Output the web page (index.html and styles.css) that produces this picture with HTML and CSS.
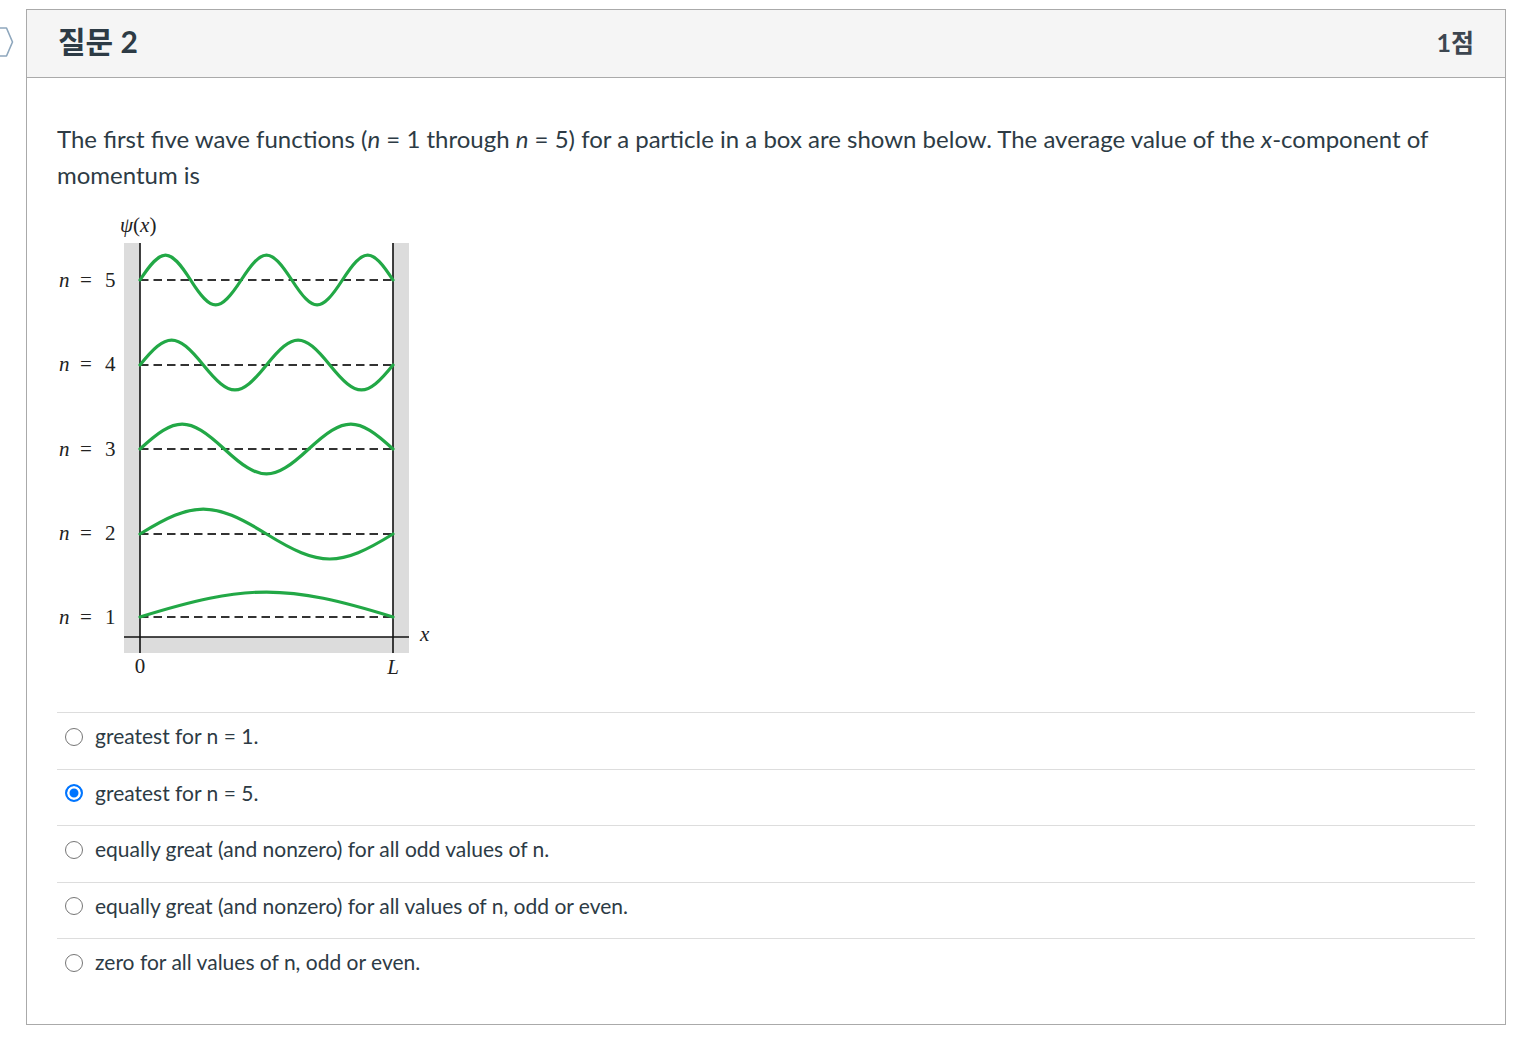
FILE: index.html
```html
<!DOCTYPE html>
<html lang="ko">
<head>
<meta charset="utf-8">
<title>질문 2</title>
<link rel="stylesheet" href="styles.css">
</head>
<body>
<svg class="flag" width="16" height="36" viewBox="0 0 16 36" aria-hidden="true">
  <path d="M-2 4 H6.5 L12.5 18 L6.5 32 H-2" fill="none" stroke="#8ea7bd" stroke-width="1.6" stroke-linejoin="round"/>
</svg>
<div class="question">
  <div class="header">
    <h2 class="title">질문 2</h2>
    <div class="points">1점</div>
  </div>
  <div class="body">
    <p class="text">The first five wave functions (<i>n</i> = 1 through <i>n</i> = 5) for a particle in a box are shown below. The average value of the <i>x</i>-component of momentum is</p>
    <svg class="figure" width="380" height="497" viewBox="56 193 380 497">
      <g fill="#dcdcdc">
        <rect x="123" y="243" width="16" height="410"/>
        <rect x="392" y="243" width="16" height="410"/>
        <rect x="123" y="637" width="285" height="16"/>
      </g>
      <g stroke="#111" stroke-width="1.6">
        <line x1="139" y1="243" x2="139" y2="653"/>
        <line x1="392" y1="243" x2="392" y2="653"/>
        <line x1="123" y1="637" x2="408" y2="637"/>
      </g>
      <g stroke="#333" stroke-width="1.8" stroke-dasharray="8.5 5">
        <line x1="139" y1="280" x2="392" y2="280"/>
        <line x1="139" y1="365" x2="392" y2="365"/>
        <line x1="139" y1="449" x2="392" y2="449"/>
        <line x1="139" y1="534" x2="392" y2="534"/>
        <line x1="139" y1="617" x2="392" y2="617"/>
      </g>
      <g fill="none" stroke="#22a846" stroke-width="3.2" stroke-linecap="round">
        <path d="M139 617 C246.4 583.7 284.6 583.7 392 617"/>
        <path d="M139 534 C192.7 500.7 211.8 500.7 265.5 534 S338.3 567.3 392 534"/>
        <path d="M139 449 C174.8 415.7 187.5 415.7 223.3 449 S271.9 482.3 307.7 449 S356.2 415.7 392 449"/>
        <path d="M139 365 C165.8 331.7 175.4 331.7 202.3 365 S238.7 398.3 265.5 365 S301.9 331.7 328.8 365 S365.2 398.3 392 365"/>
        <path d="M139 280 C160.5 246.7 168.7 246.7 189.6 280 S218.7 313.3 240.2 280 S269.3 246.7 290.8 280 S319.9 313.3 341.4 280 S370.5 246.7 392 280"/>
      </g>
      <g class="lbl">
        <text y="287"><tspan x="58" font-style="italic">n</tspan><tspan x="79">=</tspan><tspan x="104">5</tspan></text>
        <text y="371"><tspan x="58" font-style="italic">n</tspan><tspan x="79">=</tspan><tspan x="104">4</tspan></text>
        <text y="456"><tspan x="58" font-style="italic">n</tspan><tspan x="79">=</tspan><tspan x="104">3</tspan></text>
        <text y="540"><tspan x="58" font-style="italic">n</tspan><tspan x="79">=</tspan><tspan x="104">2</tspan></text>
        <text y="624"><tspan x="58" font-style="italic">n</tspan><tspan x="79">=</tspan><tspan x="104">1</tspan></text>
        <text x="119" y="232"><tspan font-style="italic">ψ</tspan>(<tspan font-style="italic">x</tspan>)</text>
        <text x="139" y="673" text-anchor="middle">0</text>
        <text x="392" y="674" text-anchor="middle" font-style="italic">L</text>
        <text x="419" y="641" font-style="italic">x</text>
      </g>
    </svg>
    <div class="answers">
      <label class="answer"><input type="radio" name="q2"><span>greatest for n = 1.</span></label>
      <label class="answer"><input type="radio" name="q2" checked><span>greatest for n = 5.</span></label>
      <label class="answer"><input type="radio" name="q2"><span>equally great (and nonzero) for all odd values of n.</span></label>
      <label class="answer"><input type="radio" name="q2"><span>equally great (and nonzero) for all values of n, odd or even.</span></label>
      <label class="answer"><input type="radio" name="q2"><span>zero for all values of n, odd or even.</span></label>
    </div>
  </div>
</div>
</body>
</html>
```
FILE: styles.css
```css
html, body {
  margin: 0;
  padding: 0;
  background: #fff;
}
body {
  position: relative;
  padding: 9px 0 0 26px;
  font-family: Lato, "Noto Sans CJK KR", sans-serif;
  color: #2d3b45;
}
.flag {
  position: absolute;
  left: 0;
  top: 24px;
}
.question {
  width: 1480px;
  box-sizing: border-box;
  border: 1px solid #aaaaaa;
}
.header {
  height: 68px;
  box-sizing: border-box;
  background: #f5f5f5;
  border-bottom: 1px solid #aaaaaa;
  display: flex;
  align-items: center;
  justify-content: space-between;
  padding: 0 31px 0 31px;
}
.title {
  margin: -7px 0 0 0;
  font-size: 30px;
  font-weight: 700;
  color: #2d3b45;
  font-family: Lato, "Noto Sans CJK KR", sans-serif;
}
.points {
  font-size: 25px;
  font-weight: 700;
  color: #3d4650;
  margin-top: -6px;
}
.body {
  padding: 43px 30px 29px 30px;
}
.text {
  margin: 0;
  font-size: 24px;
  line-height: 36px;
}
.figure {
  display: block;
}
.lbl {
  font-family: "Liberation Serif", "DejaVu Serif", serif;
  font-size: 21px;
  fill: #222;
}
.answers {
  margin-top: 22px;
}
.answer {
  display: flex;
  align-items: center;
  height: 56.5px;
  box-sizing: border-box;
  border-top: 1px solid #dddddd;
  padding-bottom: 10px;
  font-size: 21px;
  color: #2d3b45;
}
.answer input {
  appearance: none;
  -webkit-appearance: none;
  flex: none;
  width: 18px;
  height: 18px;
  margin: 2px 12px 0 8px;
  border: 1.5px solid #767676;
  border-radius: 50%;
  background: #fff;
  box-sizing: border-box;
}
.answer input:checked {
  border: 2px solid #0075ff;
  background: #0075ff;
  box-shadow: inset 0 0 0 2.5px #fff;
}
```
